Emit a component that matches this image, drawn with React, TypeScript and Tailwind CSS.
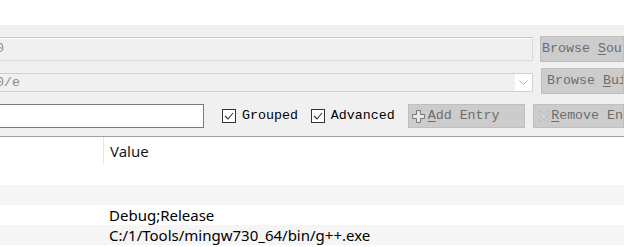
import React from "react";

const mono = { fontFamily: '"Liberation Mono", "DejaVu Sans Mono", monospace' };

// Disabled toolbar-ish button, grey like the Qt widgets on Windows
const GreyButton: React.FC<{ className?: string; children: React.ReactNode }> = ({ className = "", children }) => (
  <div
    className={`flex items-center overflow-hidden whitespace-nowrap border border-[#bfbfbf] bg-[#cccccc] text-[13.3px] text-[#6d6d6d] ${className}`}
    style={mono}
  >
    {children}
  </div>
);

const Check: React.FC<{ label: string }> = ({ label }) => (
  <div className="flex items-center gap-[6px] text-[13.3px] text-black" style={mono}>
    <div className="flex h-[14px] w-[14px] items-center justify-center border border-[#333333] bg-white">
      <svg width="10" height="8" viewBox="0 0 10 8">
        <path d="M1 4 L4 7 L9 1" fill="none" stroke="#333" strokeWidth="1.1" />
      </svg>
    </div>
    <span>{label}</span>
  </div>
);

const rows = [
  { value: "", shade: false },
  { value: "", shade: true },
  { value: "Debug;Release", shade: false },
  { value: "C:/1/Tools/mingw730_64/bin/g++.exe", shade: true },
];

export default function App() {
  return (
    <div className="h-[247px] w-[624px] overflow-hidden bg-white">
      <div className="h-[25px] bg-white" />

      {/* source / build / search panel */}
      <div className="flex h-[111px] flex-col bg-[#f0f0f0]">
        <div className="mt-[12px] flex h-[24px] items-start">
          <div
            className="-ml-[4px] flex h-[24px] w-[537px] items-center overflow-hidden border border-t-[#c5c5c5] border-[#d9d9d9] bg-[#f0f0f0] text-[13.3px] text-[#8a8a8a] shadow-[inset_0_1px_0_#ffffff]"
            style={mono}
          >
            <span className="-ml-[1px]">0</span>
          </div>
          <GreyButton className="-mt-[1px] ml-[7px] h-[26px] flex-1 pl-[1px]">
            Browse <span className="ml-[8px] underline underline-offset-2">S</span>our
          </GreyButton>
        </div>

        <div className="mt-[10px] flex h-[24px] items-start">
          <div className="-ml-[4px] mt-[2px] flex h-[19px] w-[537px] items-center border border-[#d0d0d0] bg-[#f0f0f0]">
            <span className="-ml-[1px] flex-1 text-[13.3px] text-[#8a8a8a]" style={mono}>
              0/e
            </span>
            <div className="flex h-full w-[17px] items-center justify-center bg-white">
              <svg width="9" height="5" viewBox="0 0 9 5">
                <path d="M0.5 0.5 L4.5 4.5 L8.5 0.5" fill="none" stroke="#b0b0b0" strokeWidth="1" />
              </svg>
            </div>
          </div>
          <GreyButton className="-mt-[3px] ml-[8px] h-[26px] flex-1 pl-[5px]">
            Browse <span className="ml-[8px] underline underline-offset-2">B</span>ui
          </GreyButton>
        </div>

        <div className="mt-[9px] flex h-[24px] items-center">
          <div className="-ml-[4px] h-[24px] w-[208px] border border-[#7a7a7a] bg-white" />
          <div className="ml-[18px]">
            <Check label="Grouped" />
          </div>
          <div className="ml-[13px]">
            <Check label="Advanced" />
          </div>
          <GreyButton className="ml-[13px] h-[24px] w-[117px] pl-[3px]">
            <svg width="13" height="13" viewBox="0 0 13 13" className="mr-[3px]">
              <path
                d="M4.5 0.5 H8.5 V4.5 H12.5 V8.5 H8.5 V12.5 H4.5 V8.5 H0.5 V4.5 H4.5 Z"
                fill="#e8e8e8"
                stroke="#777777"
                strokeWidth="1"
              />
            </svg>
            <span className="underline underline-offset-2">A</span>dd Entry
          </GreyButton>
          <GreyButton className="ml-[8px] h-[24px] flex-1 pl-[4px]">
            <svg width="13" height="13" viewBox="0 0 13 13" className="mr-[2px]">
              <path d="M2 2 L11 11 M11 2 L2 11" stroke="#b5b5b5" strokeWidth="3.2" strokeLinecap="round" />
              <path d="M2 2 L11 11 M11 2 L2 11" stroke="#dcdcdc" strokeWidth="1.4" strokeLinecap="round" />
            </svg>
            <span className="underline underline-offset-2">R</span>emove En
          </GreyButton>
        </div>
      </div>

      {/* cache table */}
      <div className="border-t border-[#a0a0a0]" style={{ fontFamily: '"Noto Sans", "Open Sans", sans-serif' }}>
        <div className="flex h-[28px] items-center text-[15px] text-[#1a1a1a]">
          <div className="h-full w-[104px] border-r border-[#e5e5e5]" />
          <span className="ml-[6px]">Value</span>
        </div>
        {rows.map((r, i) => (
          <div
            key={i}
            className={`flex h-[20px] items-center text-[15px] text-black ${r.shade ? "bg-[#f5f5f5]" : "bg-white"}`}
          >
            <span className="ml-[109px] whitespace-nowrap">{r.value}</span>
          </div>
        ))}
      </div>
    </div>
  );
}
